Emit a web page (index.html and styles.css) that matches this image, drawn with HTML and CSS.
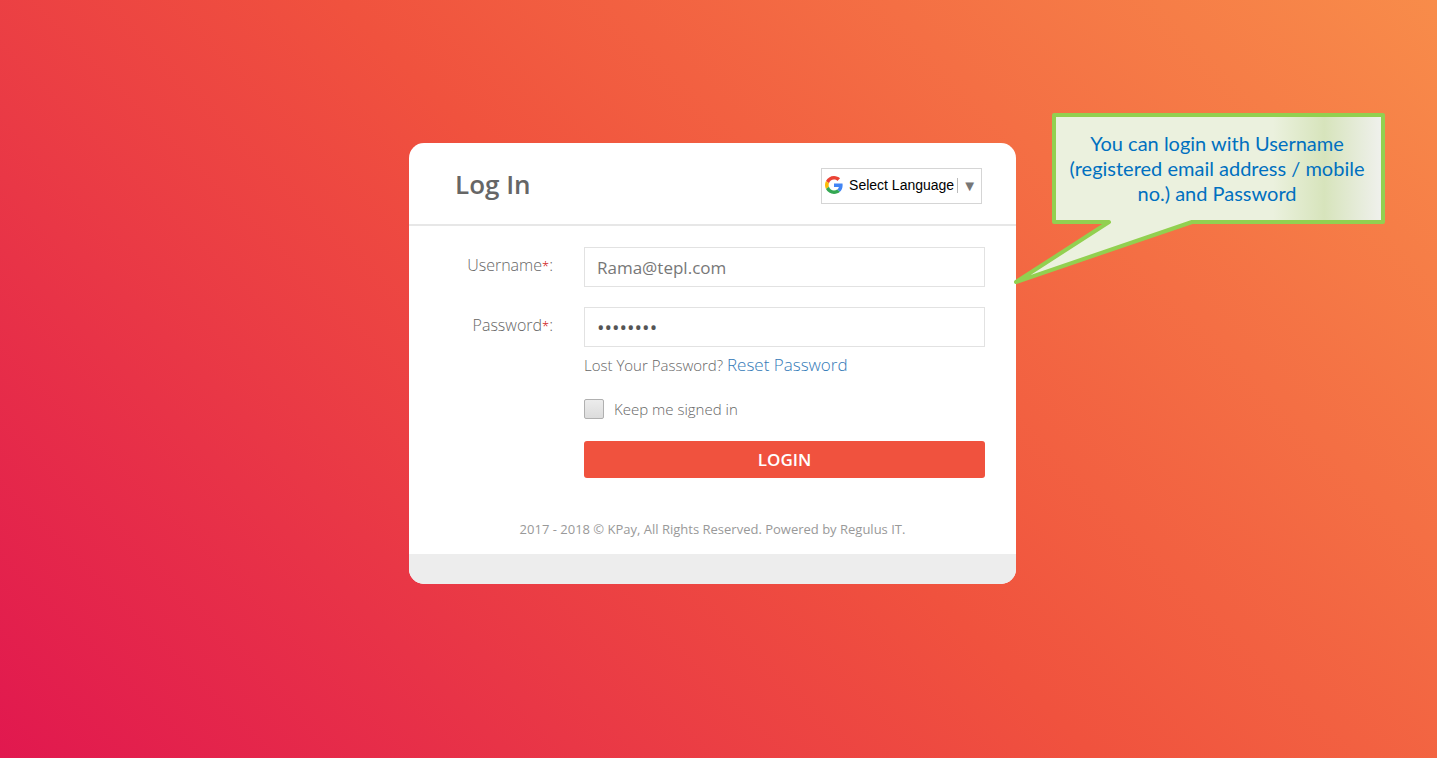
FILE: index.html
```html
<!DOCTYPE html>
<html lang="en">
<head>
    <meta charset="UTF-8">
    <meta name="viewport" content="width=device-width, initial-scale=1">
    <title>KPay - Log In</title>
    <link rel="stylesheet" href="styles.css">
</head>
<body>

<main class="login-wrap">
    <div class="login-card">
        <header class="login-header">
            <h1>Log In</h1>
            <button type="button" class="language">
                <svg class="google-logo" viewBox="0 0 48 48" aria-hidden="true">
                    <path fill="#ea4335" d="M24 9.5c3.54 0 6.71 1.22 9.21 3.6l6.85-6.85C35.9 2.38 30.47 0 24 0 14.62 0 6.51 5.38 2.56 13.22l7.98 6.19C12.43 13.72 17.74 9.5 24 9.5z"/>
                    <path fill="#4285f4" d="M46.98 24.55c0-1.57-.15-3.09-.38-4.55H24v9.02h12.94c-.58 2.96-2.26 5.48-4.78 7.18l7.73 6c4.51-4.18 7.09-10.36 7.09-17.65z"/>
                    <path fill="#fbbc05" d="M10.53 28.59c-.48-1.45-.76-2.99-.76-4.59s.27-3.14.76-4.59l-7.98-6.19C.92 16.46 0 20.12 0 24c0 3.88.92 7.54 2.56 10.78l7.97-6.19z"/>
                    <path fill="#34a853" d="M24 48c6.48 0 11.93-2.13 15.89-5.81l-7.73-6c-2.15 1.45-4.92 2.3-8.16 2.3-6.26 0-11.57-4.22-13.47-9.91l-7.98 6.19C6.51 42.62 14.62 48 24 48z"/>
                </svg>
                <span class="language-text">Select Language</span>
                <span class="language-arrow">&#9660;</span>
            </button>
        </header>

        <form class="login-form">
            <label class="field-label" for="username">Username<span class="required">*</span>:</label>
            <input class="field" type="text" id="username" value="Rama@tepl.com">

            <label class="field-label" for="password">Password<span class="required">*</span>:</label>
            <input class="field" type="password" id="password" value="password">

            <p class="lost">Lost Your Password? <a href="#">Reset Password</a></p>

            <div class="keep">
                <input type="checkbox" id="keep">
                <label for="keep">Keep me signed in</label>
            </div>

            <button type="submit" class="login-button">LOGIN</button>
        </form>

        <p class="copyright">2017 - 2018 &copy; KPay, All Rights Reserved. Powered by Regulus IT.</p>
        <footer class="login-footer"></footer>

        <!-- help bubble pointing at the username field -->
        <aside class="callout">
            <svg class="callout-shape" viewBox="0 0 376 178" aria-hidden="true">
                <defs>
                    <linearGradient id="shine" x1="0" y1="0" x2="1" y2="0">
                        <stop offset="0" stop-color="#ebf1de"/>
                        <stop offset="0.7" stop-color="#ebf1de"/>
                        <stop offset="0.84" stop-color="#d7e4bc"/>
                        <stop offset="1" stop-color="#f0f1ee"/>
                    </linearGradient>
                </defs>
                <path d="M42 5H371V112H180L4 172L97 112H42Z" fill="url(#shine)" stroke="#92d050" stroke-width="4" stroke-linejoin="round"/>
            </svg>
            <p class="callout-text">You can login with Username (registered email address / mobile no.) and Password</p>
        </aside>
    </div>
</main>

</body>
</html>
```
FILE: styles.css
```css
* {
    box-sizing: border-box;
}
body {
    margin: 0;
    min-height: 100vh;
    background: linear-gradient(45deg, #e1184f 0%, #f0523e 50%, #f88c4a 100%);
    font-family: "Open Sans", sans-serif;
    color: #666;
}
h1, p {
    margin: 0;
}
.login-wrap {
    display: flex;
    justify-content: center;
    padding: 143px 12px 40px 0;
}
.login-card {
    position: relative;
    width: 100%;
    max-width: 607px;
    background-color: #fff;
    border-radius: 15px;
}
.login-header {
    display: flex;
    justify-content: space-between;
    align-items: flex-start;
    height: 83px;
    padding: 25px 34px 0 46px;
    border-bottom: 2px solid #e7e7e7;
}
.login-header h1 {
    font-size: 26px;
    font-weight: 600;
    line-height: 32px;
}
.language {
    display: flex;
    align-items: center;
    height: 36px;
    padding: 0 4px 2px 3px;
    border: 1px solid #d5d5d5;
    background-color: #fff;
    font-family: "Liberation Sans", Arial, sans-serif;
    font-size: 14px;
    color: #000;
}
.google-logo {
    width: 18px;
    height: 18px;
    margin-right: 6px;
}
.language-arrow {
    margin-left: 3px;
    padding-left: 4px;
    border-left: 1px solid #bbb;
    font-size: 15px;
    line-height: 15px;
    color: #767676;
}
.login-form {
    display: grid;
    grid-template-columns: 98px 1fr;
    column-gap: 31px;
    padding: 21px 31px 0 46px;
}
.field-label {
    padding-top: 6px;
    font-size: 16px;
    font-weight: 300;
    line-height: 24px;
    text-align: right;
}
.required {
    font-size: 13px;
    color: #c00;
}
.field {
    width: 100%;
    height: 40px;
    margin-bottom: 20px;
    padding: 0 12px;
    border: 1px solid #e2e2e2;
    background-color: #fff;
    font-family: "Open Sans", sans-serif;
    font-size: 17px;
    font-weight: 400;
    color: #777;
}
#password {
    margin-bottom: 6px;
    font-size: 20px;
    color: #555;
}
.lost, .keep, .login-button {
    grid-column: 2;
}
.lost {
    font-size: 15px;
    font-weight: 300;
    line-height: 24px;
}
.lost a {
    font-size: 17px;
    color: #337ab7;
    text-decoration: none;
}
.keep {
    display: flex;
    align-items: center;
    gap: 10px;
    margin-top: 20px;
    font-size: 15px;
    font-weight: 300;
    line-height: 24px;
}
.keep input {
    appearance: none;
    width: 20px;
    height: 20px;
    margin: 0;
    border: 1px solid #b0b0b0;
    border-radius: 2px;
    background: linear-gradient(#ececec, #dcdcdc);
}
.keep input:checked {
    background: #f0523e;
}
.login-button {
    height: 37px;
    margin-top: 20px;
    padding: 0;
    border: none;
    border-radius: 3px;
    background-color: #f0523e;
    font-family: "Open Sans", sans-serif;
    font-size: 17px;
    font-weight: 600;
    color: #fff;
    cursor: pointer;
}
.copyright {
    padding: 41px 0 15px;
    font-size: 13px;
    font-weight: 400;
    line-height: 20px;
    text-align: center;
    color: #999;
}
.login-footer {
    height: 30px;
    background-color: #ededed;
    border-radius: 0 0 15px 15px;
}
.callout {
    position: absolute;
    top: -33px;
    left: 603px;
    width: 376px;
    height: 178px;
    padding: 21px 18px 0 52px;
}
.callout-shape {
    position: absolute;
    top: 0;
    left: 0;
    width: 376px;
    height: 178px;
}
.callout-text {
    position: relative;
    font-family: Lato, sans-serif;
    font-size: 20px;
    line-height: 25px;
    text-align: center;
    color: #0070c0;
}
```
